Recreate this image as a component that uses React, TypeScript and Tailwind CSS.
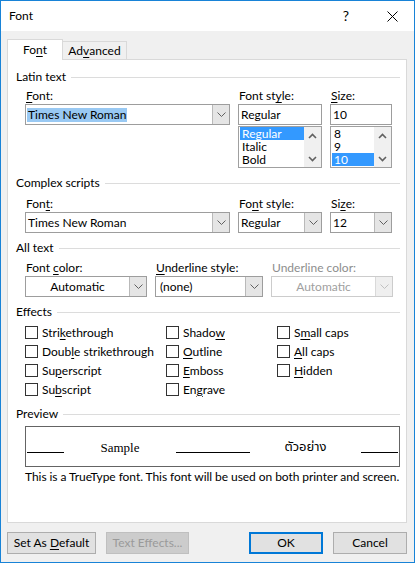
import React from "react";

const U = ({ children }: { children: React.ReactNode }) => (
  <span className="underline decoration-1 underline-offset-[2px]">{children}</span>
);

const ChevronDown = ({ color = "#606060" }: { color?: string }) => (
  <svg width="9" height="6" viewBox="0 0 9 6">
    <path d="M0.5 0.5 L4.5 4.5 L8.5 0.5" fill="none" stroke={color} strokeWidth="1" />
  </svg>
);

const ScrollUp = () => (
  <svg width="9" height="6" viewBox="0 0 9 6">
    <path d="M1 5 L4.5 1.5 L8 5" fill="none" stroke="#606060" strokeWidth="1.6" />
  </svg>
);
const ScrollDown = () => (
  <svg width="9" height="6" viewBox="0 0 9 6">
    <path d="M1 1 L4.5 4.5 L8 1" fill="none" stroke="#606060" strokeWidth="1.6" />
  </svg>
);

const ArrowBox = ({ disabled }: { disabled?: boolean }) => (
  <div
    className={`w-[17px] h-full shrink-0 flex items-center justify-center border-l ${
      disabled ? "bg-[#efefef] border-[#d9d9d9]" : "bg-[#e5e5e5] border-[#b9b9b9]"
    }`}
  >
    <ChevronDown color={disabled ? "#c0c0c0" : "#606060"} />
  </div>
);

const Header = ({ title, className }: { title: string; className: string }) => (
  <div className={`flex items-center h-[16px] pl-[8px] pr-[6px] ${className}`}>
    <span className="whitespace-nowrap">{title}</span>
    <div className="flex-1 h-px bg-[#dcdcdc] ml-[5px]" />
  </div>
);

const ListBox = ({ items, sel, widthClass }: { items: string[]; sel: number; widthClass: string }) => (
  <div className={`${widthClass} h-[42px] mt-[1px] border border-[#a0a0a0] flex bg-white`}>
    <div className="flex-1 pl-[1px] flex flex-col">
      {items.map((it, i) => (
        <div
          key={it}
          className={`h-[13px] leading-[13px] pl-[2px] whitespace-nowrap ${
            i === sel ? "bg-[#3399ff] text-white" : ""
          }`}
        >
          {it}
        </div>
      ))}
    </div>
    <div className="w-[17px] bg-[#f0f0f0] flex flex-col justify-between">
      <div className="h-[17px] flex items-center justify-center">
        <ScrollUp />
      </div>
      <div className="h-[17px] flex items-center justify-center">
        <ScrollDown />
      </div>
    </div>
  </div>
);

const Check = ({ children }: { children: React.ReactNode }) => (
  <div className="flex items-center h-[19px]">
    <div className="w-[13px] h-[13px] border border-[#333333] bg-white shrink-0" />
    <span className="ml-[4px] whitespace-nowrap">{children}</span>
  </div>
);

export default function App() {
  return (
    <div className="w-[415px] h-[563px] border border-[#1883d7] bg-[#f0f0f0] flex flex-col font-[Lato,'Liberation_Sans',sans-serif] text-[12px] leading-[16px] text-black overflow-hidden">
      {/* Title bar */}
      <div className="h-[30px] shrink-0 bg-white flex items-center">
        <span className="ml-[8px]">Font</span>
        <span className="ml-auto w-[46px] text-center text-[14px] pl-[2px]">?</span>
        <span className="w-[46px] flex justify-center pl-[2px]">
          <svg width="11" height="11" viewBox="0 0 11 11">
            <path d="M0.5 0.5 L10.5 10.5 M10.5 0.5 L0.5 10.5" stroke="#000" strokeWidth="1" />
          </svg>
        </span>
      </div>

      {/* Tabs */}
      <div className="mt-[8px] ml-[6px] h-[20px] flex items-end shrink-0">
        <div className="relative z-10 w-[56px] h-[21px] -mb-px bg-white border border-b-0 border-[#d9d9d9] flex items-center justify-center pb-[1px]">
          Fo<U>n</U>t
        </div>
        <div className="w-[64px] h-[18px] border-t border-r border-[#d9d9d9] flex items-center justify-center">
          Ad<U>v</U>anced
        </div>
      </div>

      {/* Panel */}
      <div className="ml-[6px] w-[400px] h-[464px] shrink-0 border border-[#d9d9d9] bg-white flex flex-col">
        <Header title="Latin text" className="mt-[9px]" />
        <div className="mt-[3px] pl-[17px] flex">
          <div className="w-[205px]">
            <div className="h-[16px] pl-[1px]">
              <U>F</U>ont:
            </div>
            <div className="h-[21px] border border-[#9d9d9d] flex">
              <div className="flex-1 flex items-center pl-[1px]">
                <span className="bg-[#99c9f3] leading-[14px] px-[1px]">Times New Roman</span>
              </div>
              <ArrowBox />
            </div>
          </div>
          <div className="ml-[8px] w-[84px]">
            <div className="h-[16px] pl-[1px]">
              Font st<U>y</U>le:
            </div>
            <div className="h-[21px] border border-[#9d9d9d] flex items-center pl-[2px]">Regular</div>
            <ListBox items={["Regular", "Italic", "Bold"]} sel={0} widthClass="w-[84px]" />
          </div>
          <div className="ml-[8px] w-[62px]">
            <div className="h-[16px] pl-[1px]">
              <U>S</U>ize:
            </div>
            <div className="h-[21px] border border-[#9d9d9d] flex items-center pl-[2px]">10</div>
            <ListBox items={["8", "9", "10"]} sel={2} widthClass="w-[62px]" />
          </div>
        </div>

        <Header title="Complex scripts" className="mt-[7px]" />
        <div className="mt-[5px] pl-[17px] flex">
          <div className="w-[205px]">
            <div className="h-[16px] pl-[1px]">
              Fon<U>t</U>:
            </div>
            <div className="h-[21px] border border-[#9d9d9d] flex">
              <div className="flex-1 flex items-center pl-[2px]">Times New Roman</div>
              <ArrowBox />
            </div>
          </div>
          <div className="ml-[8px] w-[84px]">
            <div className="h-[16px] pl-[1px]">
              Fo<U>n</U>t style:
            </div>
            <div className="h-[21px] border border-[#9d9d9d] flex">
              <div className="flex-1 flex items-center pl-[2px]">Regular</div>
              <ArrowBox />
            </div>
          </div>
          <div className="ml-[8px] w-[62px]">
            <div className="h-[16px] pl-[1px]">
              Si<U>z</U>e:
            </div>
            <div className="h-[21px] border border-[#9d9d9d] flex">
              <div className="flex-1 flex items-center pl-[2px]">12</div>
              <ArrowBox />
            </div>
          </div>
        </div>

        <Header title="All text" className="mt-[7px]" />
        <div className="mt-[4px] pl-[17px] flex">
          <div className="w-[122px]">
            <div className="h-[16px] pl-[1px]">
              Font <U>c</U>olor:
            </div>
            <div className="h-[21px] border border-[#9d9d9d] flex">
              <div className="flex-1 flex items-center justify-center">Automatic</div>
              <ArrowBox />
            </div>
          </div>
          <div className="ml-[8px] w-[108px]">
            <div className="h-[16px] pl-[1px]">
              <U>U</U>nderline style:
            </div>
            <div className="h-[21px] border border-[#9d9d9d] flex">
              <div className="flex-1 flex items-center pl-[4px]">(none)</div>
              <ArrowBox />
            </div>
          </div>
          <div className="ml-[8px] w-[122px]">
            <div className="h-[16px] pl-[1px] text-[#8d8d8d]">Underline color:</div>
            <div className="h-[21px] border border-[#cccccc] flex bg-white">
              <div className="flex-1 flex items-center justify-center text-[#a0a0a0]">Automatic</div>
              <ArrowBox disabled />
            </div>
          </div>
        </div>

        <Header title="Effects" className="mt-[7px]" />
        <div className="mt-[3px] pl-[17px] flex">
          <div className="w-[141px] flex flex-col">
            <Check>
              Stri<U>k</U>ethrough
            </Check>
            <Check>
              Doub<U>l</U>e strikethrough
            </Check>
            <Check>
              Su<U>p</U>erscript
            </Check>
            <Check>
              Su<U>b</U>script
            </Check>
          </div>
          <div className="w-[111px] flex flex-col">
            <Check>
              Shado<U>w</U>
            </Check>
            <Check>
              <U>O</U>utline
            </Check>
            <Check>
              <U>E</U>mboss
            </Check>
            <Check>
              En<U>g</U>rave
            </Check>
          </div>
          <div className="flex flex-col">
            <Check>
              S<U>m</U>all caps
            </Check>
            <Check>
              <U>A</U>ll caps
            </Check>
            <Check>
              <U>H</U>idden
            </Check>
          </div>
        </div>

        <Header title="Preview" className="mt-[7px]" />
        <div className="mt-[4px] ml-[17px] w-[375px] h-[41px] border border-[#646464] flex items-end">
          <div className="ml-[1px] w-[37px] h-px bg-black mb-[13px]" />
          <div className="w-[112px] text-center font-['Liberation_Serif',serif] text-[13px] leading-[13px] mb-[12px]">
            Sample
          </div>
          <div className="w-[74px] h-px bg-black mb-[13px]" />
          <div className="w-[111px] text-center font-['Noto_Sans_Thai','Liberation_Serif',serif] text-[13px] leading-[13px] mb-[12px]">
            ตัวอย่าง
          </div>
          <div className="w-[37px] h-px bg-black mb-[13px]" />
        </div>
        <div className="mt-[2px] pl-[17px] whitespace-nowrap tracking-[-0.06px]">
          This is a TrueType font. This font will be used on both printer and screen.
        </div>
      </div>

      {/* Buttons */}
      <div className="mt-[9px] ml-[6px] flex h-[22px] shrink-0">
        <div className="w-[89px] h-full border border-[#adadad] bg-[#e1e1e1] flex items-center justify-center whitespace-pre">
          {"Set As "}
          <U>D</U>
          {"efault"}
        </div>
        <div className="ml-[10px] w-[83px] h-full border border-[#bfbfbf] bg-[#cccccc] flex items-center justify-center text-[#9a9a9a]">
          Text Effects...
        </div>
        <div className="ml-[60px] w-[74px] h-full border-2 border-[#0078d7] bg-[#e1e1e1] flex items-center justify-center">
          OK
        </div>
        <div className="ml-[10px] w-[74px] h-full border border-[#adadad] bg-[#e1e1e1] flex items-center justify-center">
          Cancel
        </div>
      </div>
    </div>
  );
}
